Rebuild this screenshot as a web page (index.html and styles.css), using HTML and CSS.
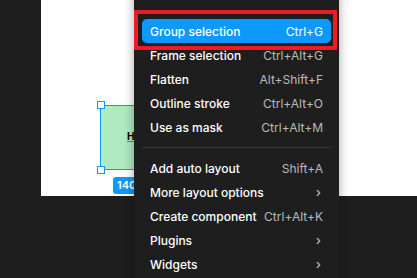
FILE: index.html
```html
<!DOCTYPE html>
<html lang="en">
<head>
    <meta charset="UTF-8">
    <title>Context menu</title>
    <link rel="stylesheet" href="styles.css">
</head>
<body>
    <div class="stage">
        <div class="canvas">
            <div class="shape">
                <span class="shape_text">H</span>
            </div>
            <span class="handle handle_tl"></span>
            <span class="handle handle_bl"></span>
            <span class="size_badge">140</span>
        </div>

        <ul class="menu">
            <li class="item active"><span>Group selection</span><span class="key">Ctrl+G</span></li>
            <li class="item"><span>Frame selection</span><span class="key">Ctrl+Alt+G</span></li>
            <li class="item"><span>Flatten</span><span class="key">Alt+Shift+F</span></li>
            <li class="item"><span>Outline stroke</span><span class="key">Ctrl+Alt+O</span></li>
            <li class="item"><span>Use as mask</span><span class="key">Ctrl+Alt+M</span></li>
            <li class="sep"></li>
            <li class="item"><span>Add auto layout</span><span class="key">Shift+A</span></li>
            <li class="item"><span>More layout options</span><span class="arrow">&rsaquo;</span></li>
            <li class="item"><span>Create component</span><span class="key">Ctrl+Alt+K</span></li>
            <li class="item"><span>Plugins</span><span class="arrow">&rsaquo;</span></li>
            <li class="item"><span>Widgets</span><span class="arrow">&rsaquo;</span></li>
        </ul>

        <div class="mark"></div>
    </div>
</body>
</html>
```

FILE: styles.css
```css
*{
    padding: 0;
    margin: 0;
    box-sizing: border-box;
}
ul,ol{
    list-style-type: none;
}
body{
    width: 417px;
    height: 278px;
    overflow: hidden;
    background: #1e1e1e;
    font-family: 'Inter', 'Liberation Sans', sans-serif;
}
.stage{
    position: relative;
    width: 417px;
    height: 278px;
}
.canvas{
    position: absolute;
    left: 41px;
    top: 0;
    width: 376px;
    height: 196px;
    background: #fff;
}
.shape{
    position: absolute;
    left: 59px;
    top: 105px;
    width: 140px;
    height: 65px;
    background: #afeac0;
    border: 1.5px solid #0d99ff;
}
.shape_text{
    position: absolute;
    left: 26px;
    top: 25px;
    font-size: 10px;
    font-weight: 700;
    color: #000;
    line-height: 10px;
    border-bottom: 1.5px solid #0d99ff;
}
.handle{
    position: absolute;
    left: 56px;
    width: 8px;
    height: 8px;
    background: #fff;
    border: 1.5px solid #0d99ff;
}
.handle_tl{
    top: 101px;
}
.handle_bl{
    top: 166px;
}
.size_badge{
    position: absolute;
    left: 72px;
    top: 177px;
    width: 48px;
    height: 17px;
    padding: 0 4px;
    border-radius: 3px;
    background: #0d99ff;
    color: #fff;
    font-size: 11px;
    font-weight: 600;
    line-height: 17px;
}
.menu{
    position: absolute;
    left: 134px;
    top: -20px;
    width: 205px;
    height: 310px;
    padding: 39px 8px 8px;
    background: #1e1e1e;
    box-shadow: 0 0 10px rgba(0, 0, 0, 0.35);
}
.item{
    display: flex;
    justify-content: space-between;
    align-items: center;
    height: 24px;
    padding: 0 8px;
    border-radius: 5px;
    color: #fff;
    font-size: 12px;
    font-weight: 500;
}
.item.active{
    background: #0d99ff;
}
.key{
    color: rgba(255, 255, 255, 0.7);
    font-weight: 400;
}
.active .key{
    color: #fff;
}
.arrow{
    color: rgba(255, 255, 255, 0.7);
    font-size: 13px;
    padding-right: 2px;
}
.sep{
    height: 1px;
    margin: 8px 0;
    background: #383838;
}
.mark{
    position: absolute;
    left: 134px;
    top: 10px;
    width: 203px;
    height: 40px;
    border: 4px solid #ed1c24;
}
```
